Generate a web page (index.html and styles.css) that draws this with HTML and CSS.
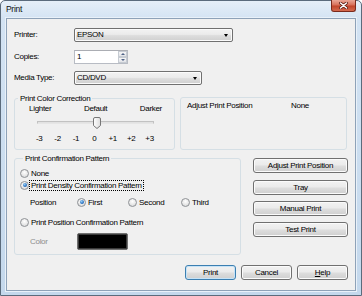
FILE: index.html
```html
<!DOCTYPE html>
<html lang="en">
<head>
    <meta charset="UTF-8">
    <title>Print</title>
    <link rel="stylesheet" href="styles.css">
</head>
<body>

    <div class="window">
        <div class="titlebar">
            <span class="title">Print</span>
            <div class="close-btn">
                <svg width="9" height="7" viewBox="0 0 9 7">
                    <path d="M1.5 1 L7.5 6 M7.5 1 L1.5 6" stroke="#5a1a10" stroke-width="3" stroke-linecap="round"/>
                    <path d="M1.5 1 L7.5 6 M7.5 1 L1.5 6" stroke="#ffffff" stroke-width="1.6" stroke-linecap="round"/>
                </svg>
            </div>
        </div>

        <div class="client">
            <div class="fields">
                <label>Printer:</label>
                <div class="combo combo-printer">EPSON<span class="arrow"></span></div>

                <label>Copies:</label>
                <div class="spin">
                    <span class="spin-value">1</span>
                    <div class="spin-btns">
                        <span class="spin-btn"><span class="tri-up"></span></span>
                        <span class="spin-btn"><span class="tri-down"></span></span>
                    </div>
                </div>

                <label>Media Type:</label>
                <div class="combo combo-media">CD/DVD<span class="arrow"></span></div>
            </div>

            <div class="groups">
                <fieldset class="group color-group">
                    <legend>Print Color Correction</legend>
                    <div class="scale-labels">
                        <span>Lighter</span>
                        <span>Default</span>
                        <span>Darker</span>
                    </div>
                    <div class="slider">
                        <div class="track"></div>
                        <svg class="thumb" width="8" height="12" viewBox="0 0 8 12">
                            <defs>
                                <linearGradient id="thumbFill" x1="0" y1="0" x2="1" y2="0">
                                    <stop offset="0" stop-color="#ffffff"/>
                                    <stop offset="1" stop-color="#dcdcdc"/>
                                </linearGradient>
                            </defs>
                            <path d="M0.5 2 Q0.5 0.5 2 0.5 H6 Q7.5 0.5 7.5 2 V8.5 L4 11.5 L0.5 8.5 Z" fill="url(#thumbFill)" stroke="#767676"/>
                        </svg>
                    </div>
                    <div class="ticks">
                        <span>-3</span><span>-2</span><span>-1</span><span>0</span><span>+1</span><span>+2</span><span>+3</span>
                    </div>
                </fieldset>

                <div class="group position-group">
                    <span class="pos-name">Adjust Print Position</span>
                    <span>None</span>
                </div>
            </div>

            <div class="lower">
                <fieldset class="group confirm-group">
                    <legend>Print Confirmation Pattern</legend>

                    <div class="radio-row">
                        <span class="radio"></span>
                        <span class="radio-label">None</span>
                    </div>
                    <div class="radio-row">
                        <span class="radio checked"></span>
                        <span class="radio-label focused">Print Density Confirmation Pattern</span>
                    </div>

                    <div class="option-row">
                        <span>Position</span>
                        <span class="option"><span class="radio checked"></span><span class="radio-label">First</span></span>
                        <span class="option"><span class="radio"></span><span class="radio-label">Second</span></span>
                        <span class="option"><span class="radio"></span><span class="radio-label">Third</span></span>
                    </div>

                    <div class="radio-row row-gap">
                        <span class="radio"></span>
                        <span class="radio-label">Print Position Confirmation Pattern</span>
                    </div>

                    <div class="option-row color-row">
                        <span class="disabled">Color</span>
                        <span class="swatch"></span>
                    </div>
                </fieldset>

                <div class="side-buttons">
                    <button class="btn">Adjust Print Position</button>
                    <button class="btn">Tray</button>
                    <button class="btn">Manual Print</button>
                    <button class="btn">Test Print</button>
                </div>
            </div>

            <div class="footer">
                <button class="btn btn-default">Print</button>
                <button class="btn">Cancel</button>
                <button class="btn"><u>H</u>elp</button>
            </div>
        </div>
    </div>

</body>
</html>
```

FILE: styles.css
```css
body {
    margin: 0;
    background: #ffffff;
    font-family: "Liberation Sans", Arial, sans-serif;
    font-size: 8px;
    letter-spacing: -0.3px;
    color: #000000;
}

.window {
    width: 362px;
    height: 296px;
    box-sizing: border-box;
    display: flex;
    flex-direction: column;
    padding: 0 5px 4px;
    border: 1px solid #5b6b7c;
    border-radius: 5px 5px 0 0;
    background: linear-gradient(to bottom, #e6eff8 0px, #d3e3f3 18px, #c4d8ec 100%);
}

.titlebar {
    height: 17px;
    display: flex;
    align-items: flex-start;
    justify-content: space-between;
}

.title {
    line-height: 17px;
    font-size: 8.5px;
    color: #111111;
}

.close-btn {
    width: 25px;
    height: 12px;
    box-sizing: border-box;
    margin-top: -1px;
    border: 1px solid #7a2a1c;
    border-top: none;
    border-radius: 0 0 3px 3px;
    background: linear-gradient(to bottom, #e9a797 0%, #d8705a 45%, #c2452b 55%, #d46a4f 100%);
    display: flex;
    align-items: center;
    justify-content: center;
}

/* client area */
.client {
    flex: 1;
    box-sizing: border-box;
    border: 1px solid #8ea2b8;
    box-shadow: 0 0 0 1px #e9f1f9;
    background: #f0f0f0;
    padding: 9px 7px 0 7px;
}

.fields {
    display: grid;
    grid-template-columns: 60px auto;
    grid-template-rows: 22px 21px 14px;
    align-items: start;
}

.fields label {
    line-height: 14px;
}

.combo {
    position: relative;
    height: 14px;
    box-sizing: border-box;
    border: 1px solid #707070;
    border-radius: 2px;
    background: linear-gradient(to bottom, #f2f2f2 0%, #ebebeb 45%, #dddddd 55%, #cfcfcf 100%);
    box-shadow: inset 0 0 0 1px #fbfbfb;
    line-height: 12px;
    padding-left: 2px;
}

.combo-printer {
    width: 159px;
}

.combo-media {
    width: 128px;
}

.arrow {
    position: absolute;
    right: 4px;
    top: 5px;
    width: 0;
    height: 0;
    border-left: 2.5px solid transparent;
    border-right: 2.5px solid transparent;
    border-top: 3px solid #000000;
}

.spin {
    width: 54px;
    height: 14px;
    box-sizing: border-box;
    display: flex;
    background: #ffffff;
    border: 1px solid #b8bcc4;
    border-top-color: #abadb3;
}

.spin-value {
    flex: 1;
    line-height: 12px;
    padding-left: 2px;
}

.spin-btns {
    width: 9px;
    display: flex;
    flex-direction: column;
}

.spin-btn {
    flex: 1;
    display: flex;
    align-items: center;
    justify-content: center;
    border: 1px solid #c6cbd2;
    background: linear-gradient(to bottom, #f6f6f6, #e2e4e8);
}

.tri-up {
    border-left: 2px solid transparent;
    border-right: 2px solid transparent;
    border-bottom: 2px solid #4d6185;
}

.tri-down {
    border-left: 2px solid transparent;
    border-right: 2px solid transparent;
    border-top: 2px solid #4d6185;
}

/* group boxes */
.group {
    margin: 0;
    padding: 0;
    min-width: 0;
    border: 1px solid #d5dfe5;
    border-radius: 3px;
}

.group legend {
    margin-left: 3px;
    padding: 0 2px;
    line-height: 11px;
    height: 11px;
}

.groups {
    display: flex;
    align-items: flex-start;
    gap: 5px;
    margin-top: 8px;
}

.color-group {
    width: 161px;
    box-sizing: border-box;
    padding-bottom: 5px;
}

.scale-labels {
    display: flex;
    justify-content: space-between;
    padding: 0 12px 0 14px;
    line-height: 10px;
}

.slider {
    position: relative;
    width: 117px;
    height: 12px;
    margin: 3px 0 0 22px;
}

.track {
    position: absolute;
    left: 0;
    right: 0;
    top: 4px;
    height: 1px;
    border: 1px solid #c2c2c2;
    border-bottom-color: #e6e6e6;
    background: #e2e2e2;
}

.thumb {
    position: absolute;
    left: 56px;
    top: 0;
}

.ticks {
    display: grid;
    grid-template-columns: repeat(7, 18.4px);
    width: 129px;
    margin: 5px 0 0 15px;
    line-height: 10px;
    text-align: center;
}

.position-group {
    width: 167px;
    height: 53px;
    box-sizing: border-box;
    margin-top: 4px;
    padding: 3px 0 0 6px;
    display: flex;
    line-height: 10px;
}

.pos-name {
    width: 104px;
}

/* confirmation pattern */
.lower {
    display: flex;
    gap: 12px;
    margin-top: 3px;
}

.confirm-group {
    width: 227px;
    box-sizing: border-box;
    padding: 3px 0 4px 5px;
}

.radio-row {
    height: 12px;
    display: flex;
    align-items: center;
}

.row-gap {
    margin-top: 8px;
}

.radio {
    width: 9px;
    height: 9px;
    box-sizing: border-box;
    border-radius: 50%;
    border: 1px solid #8f9296;
    background: radial-gradient(circle at 50% 35%, #ffffff 0%, #eaeaea 50%, #cfd1d3 100%);
    display: flex;
    align-items: center;
    justify-content: center;
    flex-shrink: 0;
}

.radio.checked::after {
    content: "";
    width: 4px;
    height: 4px;
    border-radius: 50%;
    background: radial-gradient(circle at 40% 35%, #9ad0f4 0%, #2e78c8 55%, #16448a 100%);
}

.radio-label {
    padding: 0 1px;
    border: 1px dotted transparent;
    line-height: 9px;
}

.radio-label.focused {
    border-color: #000000;
}

.option-row {
    display: grid;
    grid-template-columns: 47px 51px 53px auto;
    align-items: center;
    height: 12px;
    margin-top: 5px;
    padding-left: 10px;
}

.option {
    display: flex;
    align-items: center;
}

.color-row {
    height: 17px;
    margin-top: 5px;
}

.disabled {
    color: #8d8d8d;
}

.swatch {
    width: 51px;
    height: 17px;
    box-sizing: border-box;
    border: 1px solid #707070;
    border-radius: 2px;
    background: #000000;
    box-shadow: inset 0 0 0 1px #3a3a3a;
}

/* buttons */
.btn {
    height: 15px;
    box-sizing: border-box;
    padding: 0;
    font-family: "Liberation Sans", Arial, sans-serif;
    font-size: 8px;
    letter-spacing: -0.3px;
    color: #000000;
    border: 1px solid #707070;
    border-radius: 3px;
    background: linear-gradient(to bottom, #f2f2f2 0%, #ebebeb 45%, #dddddd 55%, #cfcfcf 100%);
    box-shadow: inset 0 0 0 1px #fbfbfb;
}

.side-buttons {
    display: flex;
    flex-direction: column;
    gap: 6px;
    margin-top: 5px;
}

.side-buttons .btn {
    width: 95px;
}

.side-buttons .btn:first-child {
    margin-bottom: 1px;
}

.footer {
    display: flex;
    justify-content: flex-end;
    gap: 5px;
    margin-top: 10px;
}

.footer .btn {
    width: 51px;
}

.btn-default {
    border-color: #3c7fb1;
    box-shadow: inset 0 0 0 1px #c6e3f7;
}
```
